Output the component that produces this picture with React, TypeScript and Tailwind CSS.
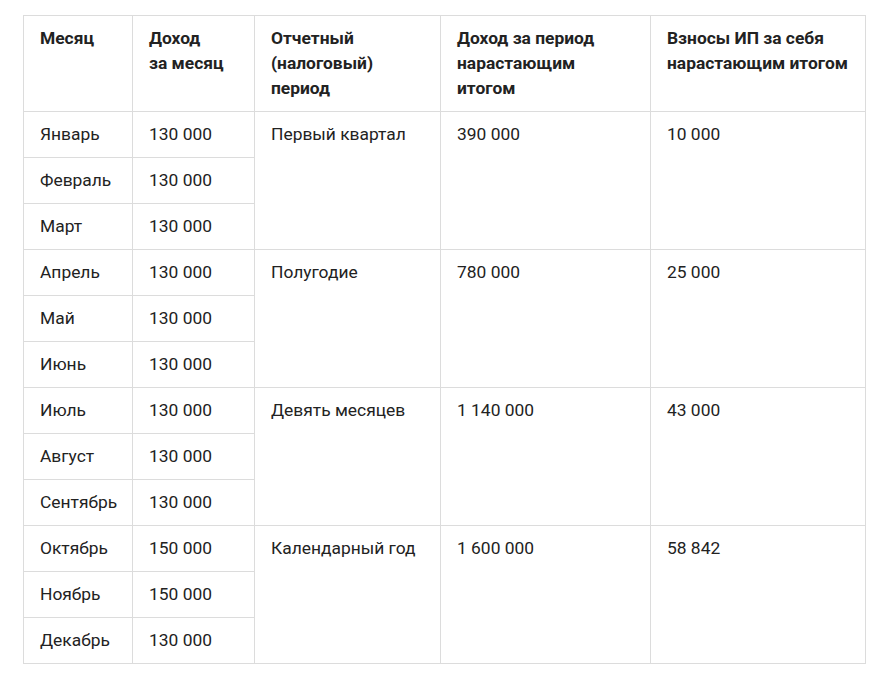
import React from "react";

const groups = [
  {
    months: [
      ["Январь", "130 000"],
      ["Февраль", "130 000"],
      ["Март", "130 000"],
    ],
    period: "Первый квартал",
    income: "390 000",
    fees: "10 000",
  },
  {
    months: [
      ["Апрель", "130 000"],
      ["Май", "130 000"],
      ["Июнь", "130 000"],
    ],
    period: "Полугодие",
    income: "780 000",
    fees: "25 000",
  },
  {
    months: [
      ["Июль", "130 000"],
      ["Август", "130 000"],
      ["Сентябрь", "130 000"],
    ],
    period: "Девять месяцев",
    income: "1 140 000",
    fees: "43 000",
  },
  {
    months: [
      ["Октябрь", "150 000"],
      ["Ноябрь", "150 000"],
      ["Декабрь", "130 000"],
    ],
    period: "Календарный год",
    income: "1 600 000",
    fees: "58 842",
  },
];

const cell = "border border-[#dcdcdc] px-4 py-[10px] align-top text-left";

export default function App() {
  return (
    <div className="min-h-[678px] w-[881px] bg-white pt-[15px] pl-[23px] font-['Roboto',_'Liberation_Sans',_sans-serif] text-[17.4px] leading-[25px] text-[#222]">
      <table className="table-fixed border-collapse w-[842px]">
        <colgroup>
          <col className="w-[109px]" />
          <col className="w-[122px]" />
          <col className="w-[186px]" />
          <col className="w-[210px]" />
          <col className="w-[215px]" />
        </colgroup>
        <thead>
          <tr>
            <th className={`${cell} font-bold`}>Месяц</th>
            <th className={`${cell} font-bold`}>
              Доход
              <br />
              за месяц
            </th>
            <th className={`${cell} font-bold`}>
              Отчетный
              <br />
              (налоговый)
              <br />
              период
            </th>
            <th className={`${cell} font-bold`}>
              Доход за период
              <br />
              нарастающим
              <br />
              итогом
            </th>
            <th className={`${cell} font-bold whitespace-nowrap`}>
              Взносы ИП за себя
              <br />
              нарастающим итогом
            </th>
          </tr>
        </thead>
        <tbody>
          {groups.map((g) =>
            g.months.map((m, i) => (
              <tr key={m[0]}>
                <td className={`${cell} font-normal`}>{m[0]}</td>
                <td className={`${cell} font-normal`}>{m[1]}</td>
                {i === 0 && (
                  <>
                    <td rowSpan={3} className={cell}>
                      {g.period}
                    </td>
                    <td rowSpan={3} className={cell}>
                      {g.income}
                    </td>
                    <td rowSpan={3} className={cell}>
                      {g.fees}
                    </td>
                  </>
                )}
              </tr>
            ))
          )}
        </tbody>
      </table>
    </div>
  );
}
